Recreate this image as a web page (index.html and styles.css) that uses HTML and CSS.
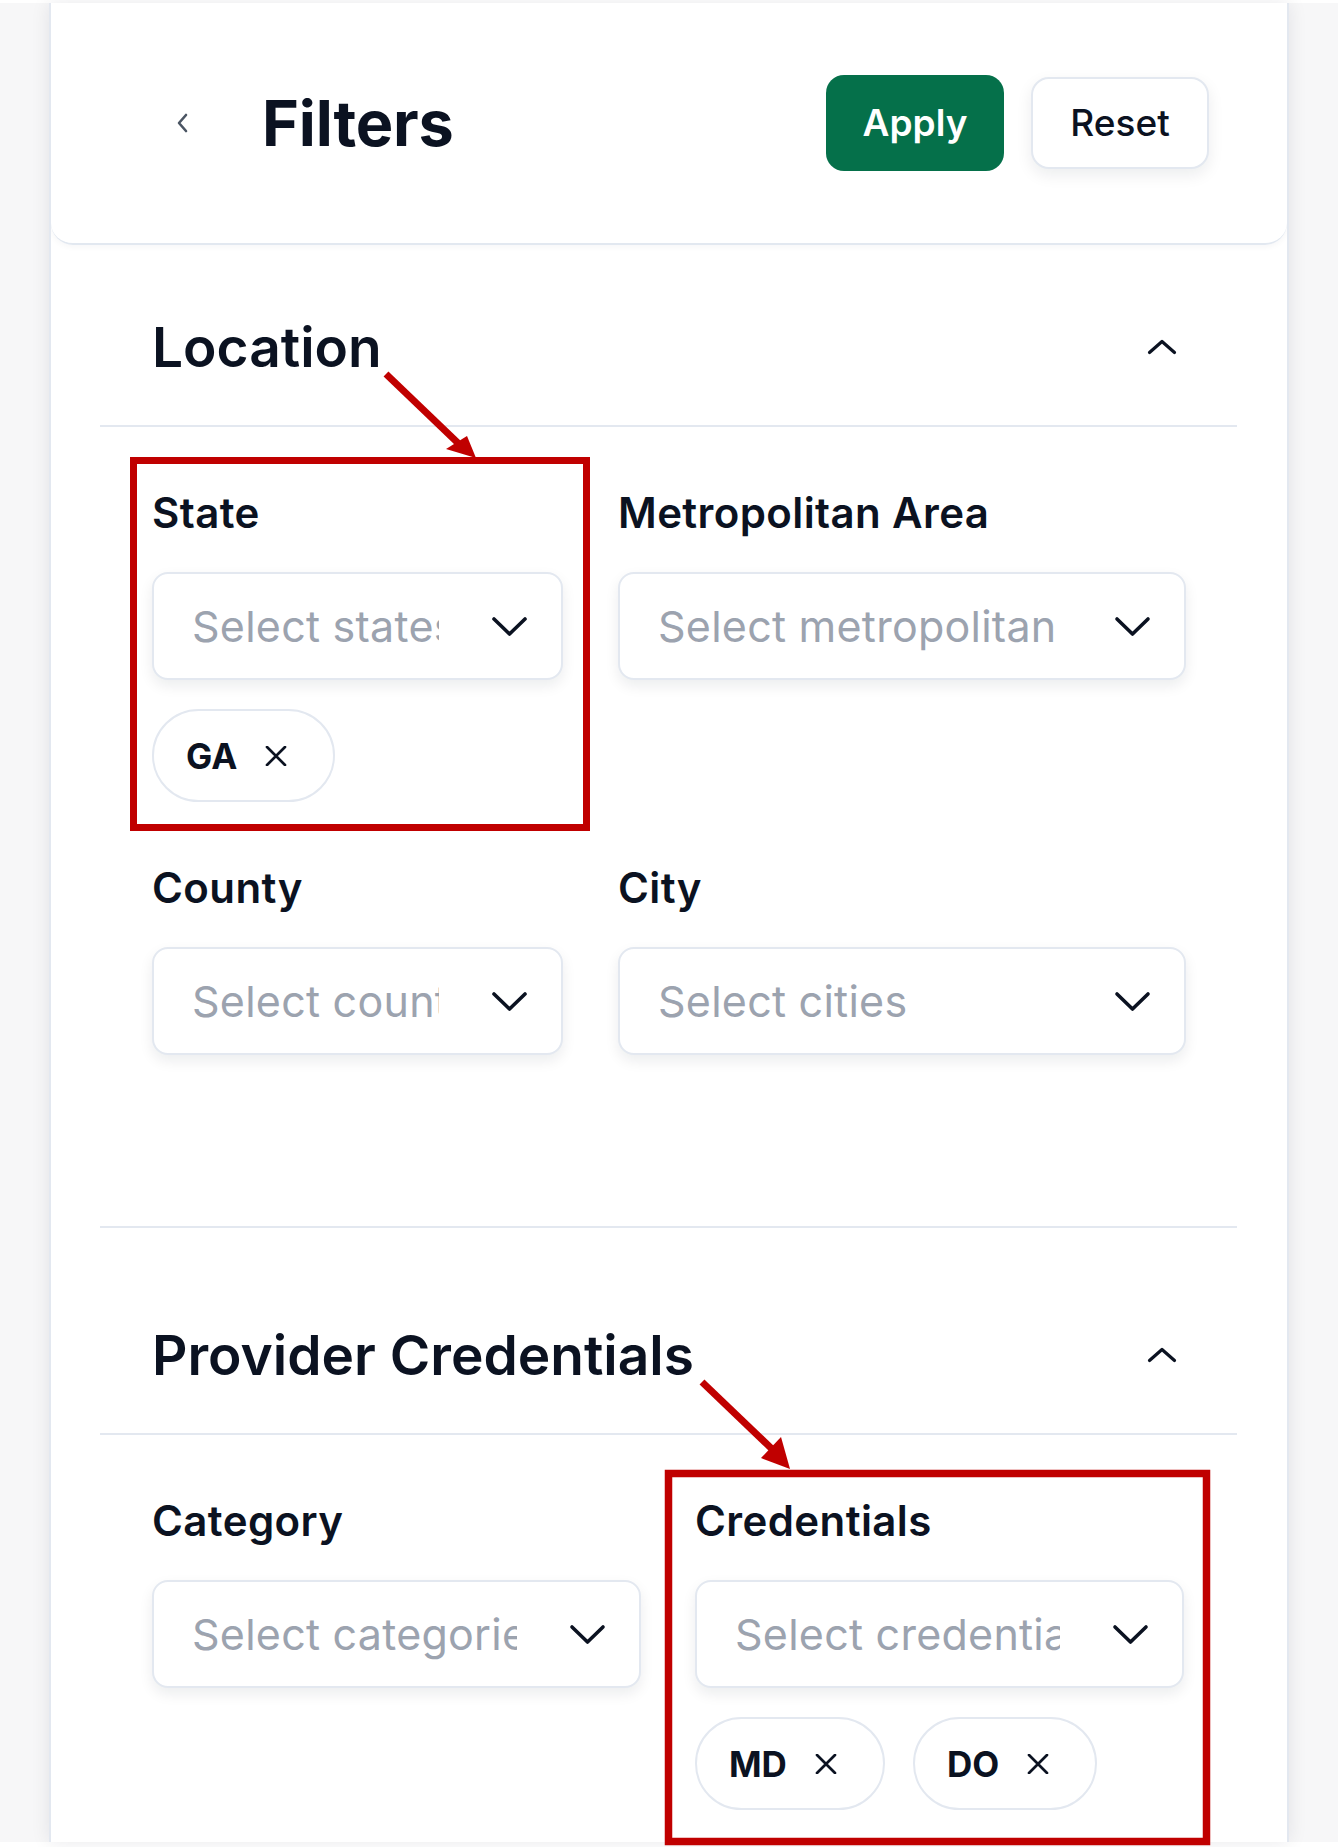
FILE: index.html
```html
<!DOCTYPE html>
<html lang="en">
<head>
<meta charset="utf-8">
<title>Filters</title>
<link rel="stylesheet" href="styles.css">
</head>
<body>
<div class="shell">
  <div class="panel">
    <header class="topbar">
      <button class="back" type="button" aria-label="Back">
        <svg width="14" height="22" viewBox="0 0 14 22"><path d="M11 3 L4 11 L11 19" fill="none" stroke="#4b5563" stroke-width="2.6" stroke-linecap="round" stroke-linejoin="round"/></svg>
      </button>
      <h1 class="page-title">Filters</h1>
      <div class="actions">
        <button class="btn btn-apply" type="button">Apply</button>
        <button class="btn btn-reset" type="button">Reset</button>
      </div>
    </header>

    <section class="group group-location">
      <div class="group-head">
        <h2 class="group-title">Location</h2>
        <svg class="caret-up" width="30" height="16" viewBox="0 0 30 16"><path d="M2.5 13.5 L15 2.5 L27.5 13.5" fill="none" stroke="#0b1221" stroke-width="3.2" stroke-linecap="round" stroke-linejoin="round"/></svg>
      </div>
      <div class="group-body grid-location">
        <div class="field">
          <div class="field-label">State</div>
          <div class="select"><span class="placeholder">Select states</span><svg class="caret-down" width="37" height="21" viewBox="0 0 37 21"><path d="M3 3 L18.5 18 L34 3" fill="none" stroke="#0b1221" stroke-width="3.6" stroke-linecap="round" stroke-linejoin="round"/></svg></div>
          <div class="chips">
            <span class="chip">GA<svg class="chip-x" width="22" height="20" viewBox="0 0 22 20"><path d="M2 1 L20 19 M20 1 L2 19" stroke="#0b1221" stroke-width="2.7" stroke-linecap="round"/></svg></span>
          </div>
        </div>
        <div class="field">
          <div class="field-label">Metropolitan Area</div>
          <div class="select"><span class="placeholder">Select metropolitan areas</span><svg class="caret-down" width="37" height="21" viewBox="0 0 37 21"><path d="M3 3 L18.5 18 L34 3" fill="none" stroke="#0b1221" stroke-width="3.6" stroke-linecap="round" stroke-linejoin="round"/></svg></div>
        </div>
        <div class="field">
          <div class="field-label">County</div>
          <div class="select"><span class="placeholder">Select counties</span><svg class="caret-down" width="37" height="21" viewBox="0 0 37 21"><path d="M3 3 L18.5 18 L34 3" fill="none" stroke="#0b1221" stroke-width="3.6" stroke-linecap="round" stroke-linejoin="round"/></svg></div>
        </div>
        <div class="field">
          <div class="field-label">City</div>
          <div class="select"><span class="placeholder">Select cities</span><svg class="caret-down" width="37" height="21" viewBox="0 0 37 21"><path d="M3 3 L18.5 18 L34 3" fill="none" stroke="#0b1221" stroke-width="3.6" stroke-linecap="round" stroke-linejoin="round"/></svg></div>
        </div>
      </div>
    </section>

    <section class="group group-credentials">
      <div class="group-head">
        <h2 class="group-title">Provider Credentials</h2>
        <svg class="caret-up" width="30" height="16" viewBox="0 0 30 16"><path d="M2.5 13.5 L15 2.5 L27.5 13.5" fill="none" stroke="#0b1221" stroke-width="3.2" stroke-linecap="round" stroke-linejoin="round"/></svg>
      </div>
      <div class="group-body grid-credentials">
        <div class="field">
          <div class="field-label">Category</div>
          <div class="select"><span class="placeholder">Select categories</span><svg class="caret-down" width="37" height="21" viewBox="0 0 37 21"><path d="M3 3 L18.5 18 L34 3" fill="none" stroke="#0b1221" stroke-width="3.6" stroke-linecap="round" stroke-linejoin="round"/></svg></div>
        </div>
        <div class="field">
          <div class="field-label">Credentials</div>
          <div class="select"><span class="placeholder">Select credentials</span><svg class="caret-down" width="37" height="21" viewBox="0 0 37 21"><path d="M3 3 L18.5 18 L34 3" fill="none" stroke="#0b1221" stroke-width="3.6" stroke-linecap="round" stroke-linejoin="round"/></svg></div>
          <div class="chips">
            <span class="chip">MD<svg class="chip-x" width="22" height="20" viewBox="0 0 22 20"><path d="M2 1 L20 19 M20 1 L2 19" stroke="#0b1221" stroke-width="2.7" stroke-linecap="round"/></svg></span>
            <span class="chip">DO<svg class="chip-x" width="22" height="20" viewBox="0 0 22 20"><path d="M2 1 L20 19 M20 1 L2 19" stroke="#0b1221" stroke-width="2.7" stroke-linecap="round"/></svg></span>
          </div>
        </div>
      </div>
    </section>
  </div>
</div>

<svg class="annotations" width="1338" height="1847" viewBox="0 0 1338 1847" aria-hidden="true">
  <rect x="133.5" y="460.5" width="453" height="367" fill="none" stroke="#c00000" stroke-width="7"/>
  <line x1="386" y1="374" x2="459" y2="444" stroke="#c00000" stroke-width="7"/>
  <polygon points="476,458 446,449 467,436" fill="#c00000"/>
  <rect x="668.5" y="1473.5" width="538" height="368" fill="none" stroke="#c00000" stroke-width="7.5"/>
  <line x1="702" y1="1382" x2="772" y2="1449" stroke="#c00000" stroke-width="7"/>
  <polygon points="790,1469 761,1458 781,1437" fill="#c00000"/>
</svg>
</body>
</html>
```

FILE: styles.css
```css
* { box-sizing: border-box; }

html, body {
  margin: 0;
  padding: 0;
}

body {
  position: relative;
  width: 1338px;
  height: 1847px;
  overflow: hidden;
  background: #ffffff;
  font-family: Inter, "Noto Sans", "Liberation Sans", sans-serif;
  color: #0b1221;
}

.shell {
  margin-top: 3px;
  height: 1839px;
  background: #f7f7f8;
  padding-left: 49px;
}

.panel {
  width: 1240px;
  height: 100%;
  background: #ffffff;
  border-left: 2px solid #e3e8f0;
  border-right: 2px solid #e3e8f0;
  box-shadow: 0 0 18px rgba(15, 23, 42, 0.09);
  overflow: hidden;
}

/* ---------- Header ---------- */
.topbar {
  height: 242px;
  display: flex;
  align-items: center;
  padding: 0 78px 0 124px;
  border-bottom: 2px solid #e2e8f0;
  border-radius: 0 0 22px 22px;
  box-shadow: 0 2px 6px rgba(15, 23, 42, 0.04);
}

.back {
  display: flex;
  align-items: center;
  justify-content: center;
  width: 14px;
  height: 22px;
  padding: 0;
  border: 0;
  background: none;
}

.page-title {
  margin: 0 0 0 73px;
  font-size: 63px;
  line-height: 76px;
  font-weight: 700;
  letter-spacing: -0.2px;
  color: #0b1221;
}

.actions {
  margin-left: auto;
  display: flex;
  align-items: center;
  gap: 27px;
}

.btn {
  width: 178px;
  border-radius: 18px;
  font-family: Inter, "Noto Sans", "Liberation Sans", sans-serif;
  font-size: 37px;
  line-height: 44px;
  padding: 0;
}

.btn-apply {
  height: 96px;
  border: 0;
  background: #05704a;
  color: #ffffff;
  font-weight: 600;
}

.btn-reset {
  height: 92px;
  border: 2px solid #e3e8f0;
  background: #ffffff;
  color: #0b1221;
  font-weight: 500;
  box-shadow: 0 6px 16px rgba(15, 23, 42, 0.08);
}

/* ---------- Groups ---------- */
.group {
  margin: 0 50px 0 49px;
}

.group-location {
  margin-top: 23px;
  border-bottom: 2px solid #e3e8f0;
}

.group-credentials {
  margin-top: 48px;
}

.group-head {
  height: 159px;
  display: flex;
  align-items: center;
  justify-content: space-between;
  padding: 0 60px 0 52px;
  border-bottom: 2px solid #e3e8f0;
}

.group-title {
  margin: 0;
  font-size: 55px;
  line-height: 66px;
  font-weight: 600;
  color: #0b1221;
}

.group-body {
  display: grid;
  row-gap: 62px;
  padding: 62px 49px 0 52px;
}

.grid-location {
  grid-template-columns: 411px 568px;
  column-gap: 55px;
  padding-bottom: 171px;
}

.grid-credentials {
  grid-template-columns: 489px 489px;
  column-gap: 54px;
}

/* ---------- Fields ---------- */
.field {
  display: flex;
  flex-direction: column;
}

.field-label {
  font-size: 42px;
  line-height: 48px;
  font-weight: 600;
  letter-spacing: 0.4px;
  color: #0b1221;
  margin-bottom: 35px;
}

.select {
  height: 108px;
  display: flex;
  align-items: center;
  gap: 52px;
  padding: 0 33px 0 38px;
  border: 2px solid #e3e8f0;
  border-radius: 16px;
  background: #ffffff;
  box-shadow: 0 6px 14px rgba(15, 23, 42, 0.08);
}

.placeholder {
  flex: 1;
  min-width: 0;
  overflow: hidden;
  white-space: nowrap;
  font-size: 43px;
  line-height: 52px;
  font-weight: 400;
  letter-spacing: 0.25px;
  color: #9ca3af;
}

.caret-down {
  flex: none;
}

.chips {
  display: flex;
  gap: 28px;
  margin-top: 29px;
}

.chip {
  height: 93px;
  display: inline-flex;
  align-items: center;
  gap: 28px;
  padding: 0 46px 0 32px;
  border: 2px solid #e3e8f0;
  border-radius: 47px;
  font-size: 35px;
  line-height: 42px;
  font-weight: 700;
  color: #0b1221;
}

.chip-x {
  flex: none;
}

/* ---------- Annotation overlay ---------- */
.annotations {
  position: absolute;
  left: 0;
  top: 0;
  pointer-events: none;
}
```
